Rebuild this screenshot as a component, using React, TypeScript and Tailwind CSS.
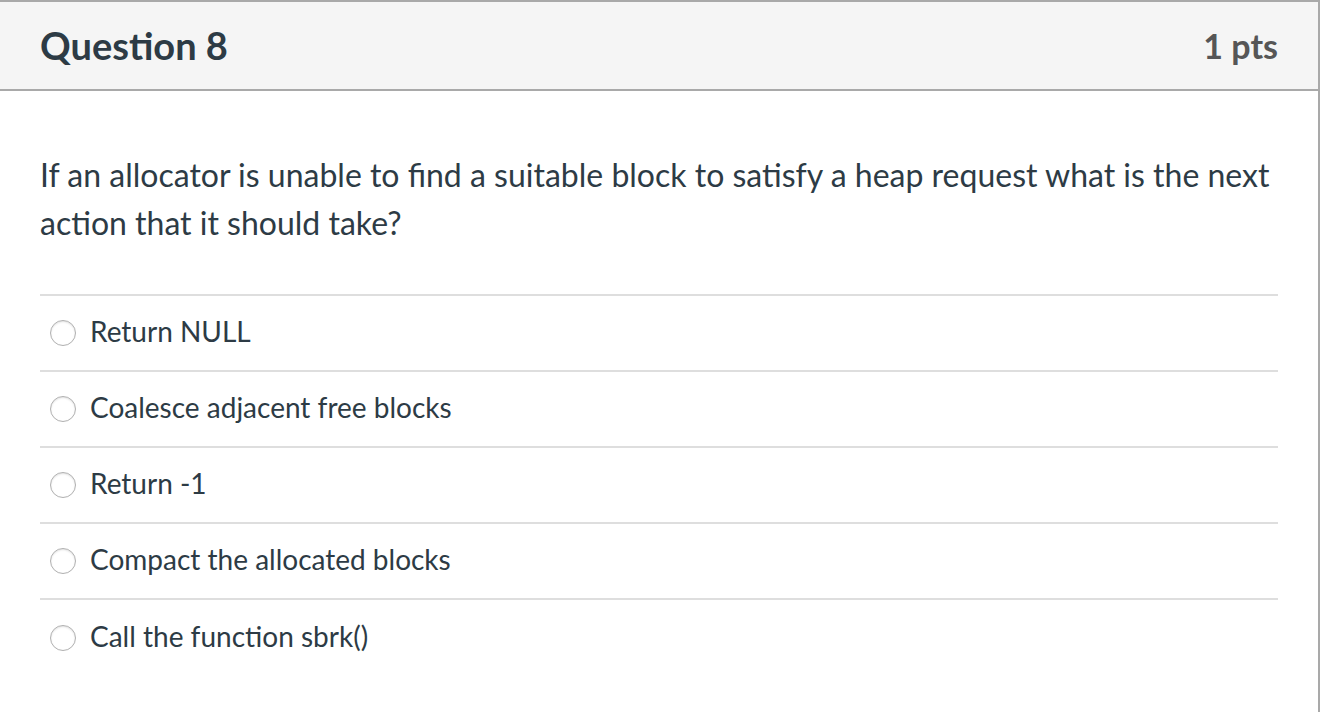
import React from "react";

const answers = [
  "Return NULL",
  "Coalesce adjacent free blocks",
  "Return -1",
  "Compact the allocated blocks",
  "Call the function sbrk()",
];

export default function App() {
  return (
    <div
      className="h-[712px] w-[1320px] overflow-hidden bg-white"
      style={{ fontFamily: "Lato, 'Noto Sans', sans-serif" }}
    >
      <div className="h-full border-t-2 border-r-2 border-[#a9a9a9]">
        <div className="flex h-[89px] items-center justify-between border-b-2 border-[#a9a9a9] bg-[#f5f5f5] pl-10 pr-10">
          <h2 className="text-[38px] font-bold text-[#2d3b45]">Question 8</h2>
          <span className="text-[34px] font-bold text-[#565656]">1 pts</span>
        </div>
        <div className="px-10 pt-[60px]">
          <p className="-mr-2 text-[32px] leading-[48px] text-[#2d3b45]">
            If an allocator is unable to find a suitable block to satisfy a heap request what is the next action that it
            should take?
          </p>
          <div className="mt-[47px] border-t-2 border-[#dedede]">
            {answers.map((a, i) => (
              <label
                key={a}
                className={
                  "flex h-[76px] items-center gap-[14px] pl-[10px] " +
                  (i < answers.length - 1 ? "border-b-2 border-[#dedede]" : "")
                }
              >
                <span className="h-[26px] w-[26px] rounded-full border border-[#b0b0b0] bg-white shadow-[inset_0_1px_2px_rgba(0,0,0,0.12)]" />
                <span className="mb-1 text-[28px] text-[#2d3b45]">{a}</span>
              </label>
            ))}
          </div>
        </div>
      </div>
    </div>
  );
}
